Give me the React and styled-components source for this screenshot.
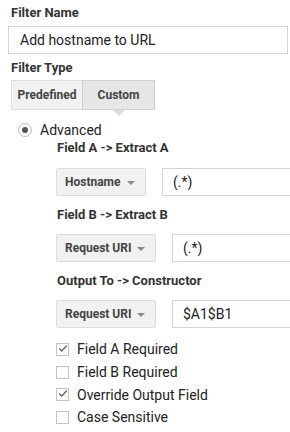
import React from "react";
import styled, { createGlobalStyle } from "styled-components";

const Global = createGlobalStyle`
  body {
    margin: 0;
    background: #fff;
    font-family: Roboto, "Liberation Sans", sans-serif;
    color: #222;
    overflow: hidden;
  }
`;

const Page = styled.div`
  width: 290px;
  height: 432px;
  padding-left: 8px;
  box-sizing: border-box;
  overflow: hidden;
`;

const Label = styled.div`
  font-size: 13px;
  font-weight: 700;
  line-height: 18px;
  color: #333;
  margin-top: ${(p) => p.$mt || 0}px;
  padding-left: ${(p) => p.$pl || 0}px;
`;

const TextInput = styled.div`
  box-sizing: border-box;
  height: 28px;
  width: ${(p) => p.$w}px;
  flex-shrink: 0;
  border: 1px solid #d4d4d4;
  display: flex;
  align-items: center;
  padding-left: ${(p) => p.$pl || 10}px;
  font-size: 14px;
  color: #222;
  margin-top: ${(p) => p.$mt || 0}px;
`;

const Toggle = styled.div`
  display: flex;
  margin-top: 3px;
  margin-left: 3px;
`;

const ToggleButton = styled.div`
  position: relative;
  box-sizing: border-box;
  height: 30px;
  width: ${(p) => p.$w}px;
  display: flex;
  align-items: center;
  justify-content: center;
  font-size: 12px;
  font-weight: 700;
  color: #444;
  background: ${(p) => (p.$active ? "#e6e6e6" : "#f1f1f1")};
  border: 1px solid ${(p) => (p.$active ? "#cfcfcf" : "#dedede")};
  margin-left: ${(p) => (p.$active ? -1 : 0)}px;

  ${(p) =>
    p.$active &&
    `
    &::after {
      content: "";
      position: absolute;
      left: 50%;
      bottom: -7px;
      margin-left: -6px;
      border-left: 6px solid transparent;
      border-right: 6px solid transparent;
      border-top: 6px solid #dcdcdc;
    }
  `}
`;

const RadioRow = styled.div`
  display: flex;
  align-items: center;
  height: 18px;
  margin-top: 11px;
  padding-left: 10px;
  font-size: 14px;
  color: #222;
`;

const Radio = styled.span`
  box-sizing: border-box;
  width: 14px;
  height: 14px;
  border-radius: 50%;
  border: 1px solid #bdbdbd;
  display: flex;
  align-items: center;
  justify-content: center;
  margin-right: 8px;

  &::after {
    content: "";
    width: 6px;
    height: 6px;
    border-radius: 50%;
    background: #555;
  }
`;

const Section = styled.div`
  padding-left: 48px;
`;

const FieldRow = styled.div`
  display: flex;
  align-items: center;
  gap: 16px;
  margin-top: ${(p) => p.$mt}px;
`;

const Select = styled.div`
  box-sizing: border-box;
  height: 28px;
  width: ${(p) => p.$w}px;
  flex-shrink: 0;
  background: #f1f1f1;
  border: 1px solid #dcdcdc;
  border-radius: 2px;
  display: flex;
  align-items: center;
  justify-content: space-between;
  padding: 0 10px 0 8px;
  font-size: 12px;
  font-weight: 700;
  color: #444;

  &::after {
    content: "";
    border-left: 4px solid transparent;
    border-right: 4px solid transparent;
    border-top: 4px solid #888;
    margin-top: 2px;
  }
`;

const CheckList = styled.div`
  margin-top: 10px;
`;

const CheckRow = styled.div`
  display: flex;
  align-items: center;
  height: 22.7px;
  font-size: 14px;
  color: #222;
`;

const Box = styled.span`
  box-sizing: border-box;
  width: 13px;
  height: 13px;
  border: 1px solid #c4c4c4;
  margin-right: 8px;
  display: flex;
  align-items: center;
  justify-content: center;
`;

const Check = () => (
  <svg width="13" height="11" viewBox="0 0 13 11" style={{ marginTop: -2, marginLeft: 1 }}>
    <path d="M1.5 5.5 L4.8 8.8 L11.5 1.5" fill="none" stroke="#666" strokeWidth="1.8" />
  </svg>
);

const checks = [
  { label: "Field A Required", on: true },
  { label: "Field B Required", on: false },
  { label: "Override Output Field", on: true },
  { label: "Case Sensitive", on: false },
];

export default function App() {
  return (
    <Page>
      <Global />
      <Label $mt={4} $pl={3}>Filter Name</Label>
      <TextInput $w={280} $mt={4} $pl={11}>Add hostname to URL</TextInput>
      <Label $mt={5} $pl={3}>Filter Type</Label>
      <Toggle>
        <ToggleButton $w={72}>Predefined</ToggleButton>
        <ToggleButton $w={73} $active>Custom</ToggleButton>
      </Toggle>
      <RadioRow>
        <Radio />
        Advanced
      </RadioRow>
      <Section>
        <Label $pl={1}>Field A -&gt; Extract A</Label>
        <FieldRow $mt={11}>
          <Select $w={90}>Hostname</Select>
          <TextInput $w={150}>(.*)</TextInput>
        </FieldRow>
        <Label $mt={10} $pl={1}>Field B -&gt; Extract B</Label>
        <FieldRow $mt={10}>
          <Select $w={100}>Request URI</Select>
          <TextInput $w={150}>(.*)</TextInput>
        </FieldRow>
        <Label $mt={10} $pl={1}>Output To -&gt; Constructor</Label>
        <FieldRow $mt={10}>
          <Select $w={100}>Request URI</Select>
          <TextInput $w={150}>$A1$B1</TextInput>
        </FieldRow>
        <CheckList>
          {checks.map((c) => (
            <CheckRow key={c.label}>
              <Box>{c.on && <Check />}</Box>
              {c.label}
            </CheckRow>
          ))}
        </CheckList>
      </Section>
    </Page>
  );
}
